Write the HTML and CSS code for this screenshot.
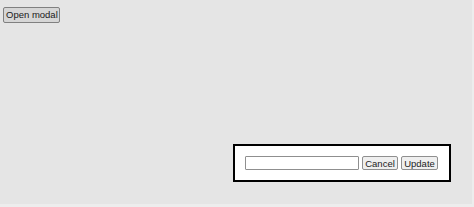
FILE: index.html
```html
<!DOCTYPE html>
<html lang="en">
<head>
    <meta charset="UTF-8">
    <meta name="viewport" content="width=device-width, initial-scale=1.0">
    <title>Modal</title>
    <link rel="stylesheet" href="styles.css">
</head>
<body>
    <div id="page">
        <button class="btn" id="open">Open modal</button>
    </div>

    <div id="backdrop"></div>
    <div id="modal">
        <form class="row">
            <input type="text" class="field">
            <button type="button" class="btn">Cancel</button>
            <button type="button" class="btn">Update</button>
        </form>
    </div>
</body>
</html>
```

FILE: styles.css
```css
html, body {
    margin: 0;
    padding: 0;
    height: 100%;
}

body {
    font-family: "Liberation Sans", Arial, sans-serif;
    background-color: #ffffff;
    overflow: hidden;
}

#page {
    padding: 4px 3px;
}

.btn {
    font-family: "Liberation Sans", Arial, sans-serif;
    font-size: 9.5px;
    height: 15px;
    line-height: 11px;
    padding: 0 2px;
    margin: 0;
    background-color: #efefef;
    color: #222;
    border: 1px solid #8f8f8f;
    border-radius: 2px;
    box-sizing: border-box;
    white-space: nowrap;
}

#open {
    width: 57px;
    height: 16px;
}

/* fond gris derrière la fenêtre */
#backdrop {
    position: fixed;
    top: 0;
    left: 0;
    width: 472px;
    height: 204px;
    background-color: rgba(0, 0, 0, 0.1);
    box-shadow: 0 0 0 3px rgba(0, 0, 0, 0.07);
}

#modal {
    position: absolute;
    top: 144px;
    left: 233px;
    width: 218px;
    height: 38px;
    box-sizing: border-box;
    border: 2px solid #000;
    background-color: #ffffff;
    padding: 10px 0 0 10px;
}

.row {
    display: flex;
    gap: 3px;
    margin: 0;
}

.field {
    width: 114px;
    height: 14px;
    box-sizing: border-box;
    margin: 0;
    padding: 0 2px;
    border: 1px solid #8f8f8f;
    border-radius: 1px;
    font-size: 9px;
}

.row .btn {
    height: 14px;
}

.row .btn:nth-child(2) {
    width: 36px;
}

.row .btn:nth-child(3) {
    width: 37px;
}
```
